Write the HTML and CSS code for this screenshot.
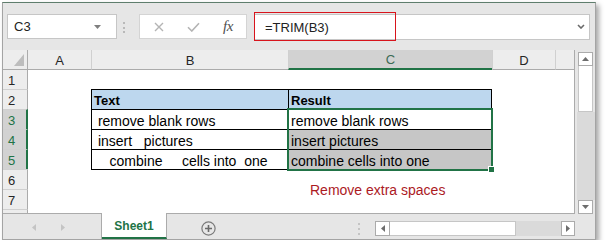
FILE: index.html
```html
<!DOCTYPE html>
<html lang="en">
<head>
  <meta charset="UTF-8">
  <title>TRIM - remove extra spaces</title>
  <link rel="stylesheet" href="styles.css">
</head>
<body>
  <div class="window">
    <!-- name box + formula bar -->
    <div class="toolbar">
      <div class="namebox">
        <span>C3</span>
        <svg class="namebox-arrow" width="7" height="4" viewBox="0 0 7 4"><path d="M0 0h7L3.5 4z" fill="#7f7f7f"/></svg>
      </div>
      <div class="grip"><i></i><i></i><i></i></div>
      <div class="fxbox">
        <svg class="icon-cancel" width="10" height="10" viewBox="0 0 10 10"><path d="M1 1L9 9M9 1L1 9" stroke="#b4b4b4" stroke-width="1.4" fill="none"/></svg>
        <svg class="icon-enter" width="13" height="10" viewBox="0 0 13 10"><path d="M1 5.2L4.8 9 12 1.2" stroke="#b4b4b4" stroke-width="1.6" fill="none"/></svg>
        <span class="fx">fx</span>
      </div>
      <div class="formula">
        <div class="formula-hl">=TRIM(B3)</div>
        <svg class="formula-expand" width="8" height="5" viewBox="0 0 8 5"><path d="M1 1l3 3 3-3" stroke="#6a6a6a" stroke-width="1.6" fill="none"/></svg>
      </div>
    </div>

    <div class="main">
      <div class="sheet">
        <div class="corner"><svg width="10" height="12" viewBox="0 0 10 12"><path d="M10 0V12H0z" fill="#bdbdbd"/></svg></div>
        <div class="colhead">A</div>
        <div class="colhead">B</div>
        <div class="colhead active">C</div>
        <div class="colhead">D</div>
        <div class="colhead"></div>

        <div class="rowhead">1</div>
        <div class="rowhead">2</div>
        <div class="rowhead active">3</div>
        <div class="rowhead active">4</div>
        <div class="rowhead active">5</div>
        <div class="rowhead">6</div>
        <div class="rowhead">7</div>
        <div class="rowhead"></div>

        <div class="data">
          <div class="cell head">Text</div>
          <div class="cell head result">Result</div>
          <div class="cell"> remove blank rows</div>
          <div class="cell result">remove blank rows</div>
          <div class="cell"> insert   pictures</div>
          <div class="cell result shaded">insert pictures</div>
          <div class="cell bottom">    combine     cells into  one</div>
          <div class="cell result shaded bottom">combine cells into one</div>
          <div class="selection"><span class="handle"></span></div>
        </div>

        <div class="note">Remove extra spaces</div>
      </div>

      <div class="vscroll">
        <div class="sbtn"><svg width="7" height="4" viewBox="0 0 7 4"><path d="M0 4h7L3.5 0z" fill="#6d6d6d"/></svg></div>
        <div class="vthumb"></div>
        <div class="vtrack"></div>
        <div class="sbtn"><svg width="7" height="4" viewBox="0 0 7 4"><path d="M0 0h7L3.5 4z" fill="#6d6d6d"/></svg></div>
      </div>
    </div>

    <!-- sheet tabs + horizontal scroll -->
    <div class="tabbar">
      <div class="tabnav">
        <svg width="4" height="7" viewBox="0 0 4 7"><path d="M4 0V7L0 3.5z" fill="#c4c4c4"/></svg>
        <svg width="4" height="7" viewBox="0 0 4 7"><path d="M0 0V7L4 3.5z" fill="#c4c4c4"/></svg>
      </div>
      <div class="tab">Sheet1</div>
      <div class="addsheet">
        <svg width="15" height="15" viewBox="0 0 15 15"><circle cx="7.5" cy="7.5" r="6.6" stroke="#7a7a7a" stroke-width="1.2" fill="none"/><path d="M7.5 4v7M4 7.5h7" stroke="#6a6a6a" stroke-width="1.6"/></svg>
      </div>
      <div class="grip tabgrip"><i></i><i></i><i></i></div>
      <div class="hscroll">
        <div class="sbtn"><svg width="4" height="7" viewBox="0 0 4 7"><path d="M4 0V7L0 3.5z" fill="#6d6d6d"/></svg></div>
        <div class="hthumb"></div>
        <div class="htrack"></div>
        <div class="sbtn"><svg width="4" height="7" viewBox="0 0 4 7"><path d="M0 0V7L4 3.5z" fill="#6d6d6d"/></svg></div>
      </div>
      <div class="corner-fill"></div>
    </div>
  </div>
</body>
</html>
```

FILE: styles.css
```css
* { box-sizing: border-box; }
body { margin: 0; background: #fff; font-family: "Liberation Sans", Arial, sans-serif; color: #000; }

.window {
  width: 594px; height: 238px; margin: 2px 0 0 2px;
  display: flex; flex-direction: column;
  background: #e6e6e6;
  border: 1px solid #a4a4a4; border-top-color: #5f7e6d;
  box-shadow: 3px 3px 5px rgba(0, 0, 0, 0.35);
}

/* toolbar */
.toolbar { height: 47px; flex: none; display: flex; align-items: flex-start; padding: 11px 0 0 4px; }
.namebox {
  width: 110px; height: 25px; display: flex; align-items: center; justify-content: space-between;
  padding: 0 15px 0 6px; background: #fff; border: 1px solid #c6c6c6; font-size: 13px; color: #222;
}
.grip { display: flex; flex-direction: column; gap: 2.5px; width: 22px; padding: 8px 0 0 6px; }
.grip i { display: block; width: 2px; height: 2px; background: #b9b9b9; }
.fxbox {
  width: 108px; height: 25px; display: flex; align-items: center; padding-left: 14px;
  background: #fff; border: 1px solid #d4d4d4;
}
.icon-enter { margin-left: 23px; }
.fx { margin-left: 23px; font: italic 15px "Liberation Serif", serif; color: #505050; letter-spacing: -0.5px; }
.formula {
  width: 336px; height: 26px; margin-left: 7px; display: flex; align-items: center;
  background: #fff; border: 1px solid #c6c6c6;
}
.formula-hl {
  width: 142px; align-self: stretch; margin: -3px 0 -2px -1px; padding: 1px 0 0 10px;
  display: flex; align-items: center; border: 1px solid #d8141c; font-size: 13px; color: #222;
}
.formula-expand { margin: 0 4px 2px auto; }

/* sheet */
.main { height: 164px; flex: none; display: flex; }
.sheet {
  width: 572px; height: 164px; overflow: hidden;
  display: grid;
  grid-template-columns: 25px 63px 197px 204px 63px 19px;
  grid-template-rows: 20px 19px repeat(6, 20px) 4px;
  background: #fff; border-right: 1px solid #ababab; border-bottom: 1px solid #ababab;
}
.corner {
  display: flex; justify-content: flex-end; align-items: flex-end; padding: 0 3px 3px 0;
  background: #ededed; border-right: 1px solid #ababab; border-bottom: 1px solid #ababab;
}
.colhead {
  display: flex; align-items: center; justify-content: center; padding-top: 1px;
  background: #ededed; border-bottom: 1px solid #ababab; font-size: 13px; color: #262626;
}
.colhead + .colhead { border-left: 1px solid #d0d0d0; }
.colhead.active { background: #d2d2d2; border-bottom: 2px solid #217346; color: #3c6b55; }
.rowhead {
  grid-column: 1; overflow: hidden;
  display: flex; align-items: center; padding: 1px 0 0 5px;
  background: #ededed; border-right: 1px solid #ababab; font-size: 13px; color: #262626;
}
.rowhead + .rowhead { border-top: 1px solid #d0d0d0; }
.rowhead.active { background: #d2d2d2; border-right: 2px solid #217346; color: #217346; }

.data {
  grid-column: 3 / 5; grid-row: 3 / 7; height: 81px; align-self: start; position: relative;
  display: grid; grid-template-columns: 197px 204px; grid-template-rows: 20px 20px 20px 21px;
}
.cell {
  display: flex; align-items: center; padding: 2px 0 0 2px; white-space: pre;
  border-top: 1px solid #000; border-left: 1px solid #000; font-size: 14px;
}
.cell.result { border-right: 1px solid #000; }
.cell.bottom { border-bottom: 1px solid #000; }
.cell.head { background: #bdd7ee; font-weight: bold; font-size: 13px; }
.cell.shaded { background: #c6c6c6; }
/* selection frame over C3:C5 */
.selection {
  position: absolute; left: 196px; top: 19px; width: 206px; height: 63px;
  border: 2px solid #217346;
}
.handle {
  position: absolute; right: -4px; bottom: -4px; width: 7px; height: 7px;
  background: #217346; border: 1px solid #fff;
}
.note {
  grid-column: 4; grid-row: 7 / 9; display: flex; align-items: center; padding: 1px 0 0 22px;
  font-size: 14px; color: #ac1a1f;
}

.vscroll { width: 20px; display: flex; flex-direction: column; padding: 2px 2px 0 3px; }
.sbtn {
  width: 15px; height: 14px; flex: none; display: flex; align-items: center; justify-content: center;
  background: #fff; border: 1px solid #ababab;
}
.vthumb { height: 46px; flex: none; background: #fff; border: 1px solid #c6c6c6; border-top: none; }
.vtrack { flex: 1; background: #dadada; margin: 0 -2px 0 -1px; }

/* tabs */
.tabbar { height: 25px; flex: none; display: flex; }
.tabnav {
  width: 99px; display: flex; align-items: center; gap: 25px; padding: 2px 0 0 29px;
  border-right: 1px solid #ababab;
}
.tab {
  width: 65px; height: 26px; margin-top: -1px; position: relative;
  display: flex; align-items: center; justify-content: center; padding-top: 1px;
  background: #fff; border-right: 1px solid #ababab; border-bottom: 2px solid #217346;
  font-size: 12px; font-weight: bold; color: #217346;
}
.addsheet { width: 82px; display: flex; align-items: center; justify-content: center; padding-top: 3px; }
.tabgrip { width: 126px; align-items: flex-end; padding: 9px 15px 0 0; gap: 3px; }
.tabgrip i { background: #c4c4c4; }
.hscroll { width: 200px; display: flex; align-items: flex-start; padding-top: 7px; }
.hscroll .sbtn { width: 15px; height: 15px; }
.hscroll .sbtn:last-child { width: 14px; }
.hthumb { width: 126px; height: 15px; background: #fff; border: 1px solid #c6c6c6; border-left: none; }
.htrack { width: 45px; height: 15px; background: #dadada; }
.corner-fill { width: 20px; }
```
